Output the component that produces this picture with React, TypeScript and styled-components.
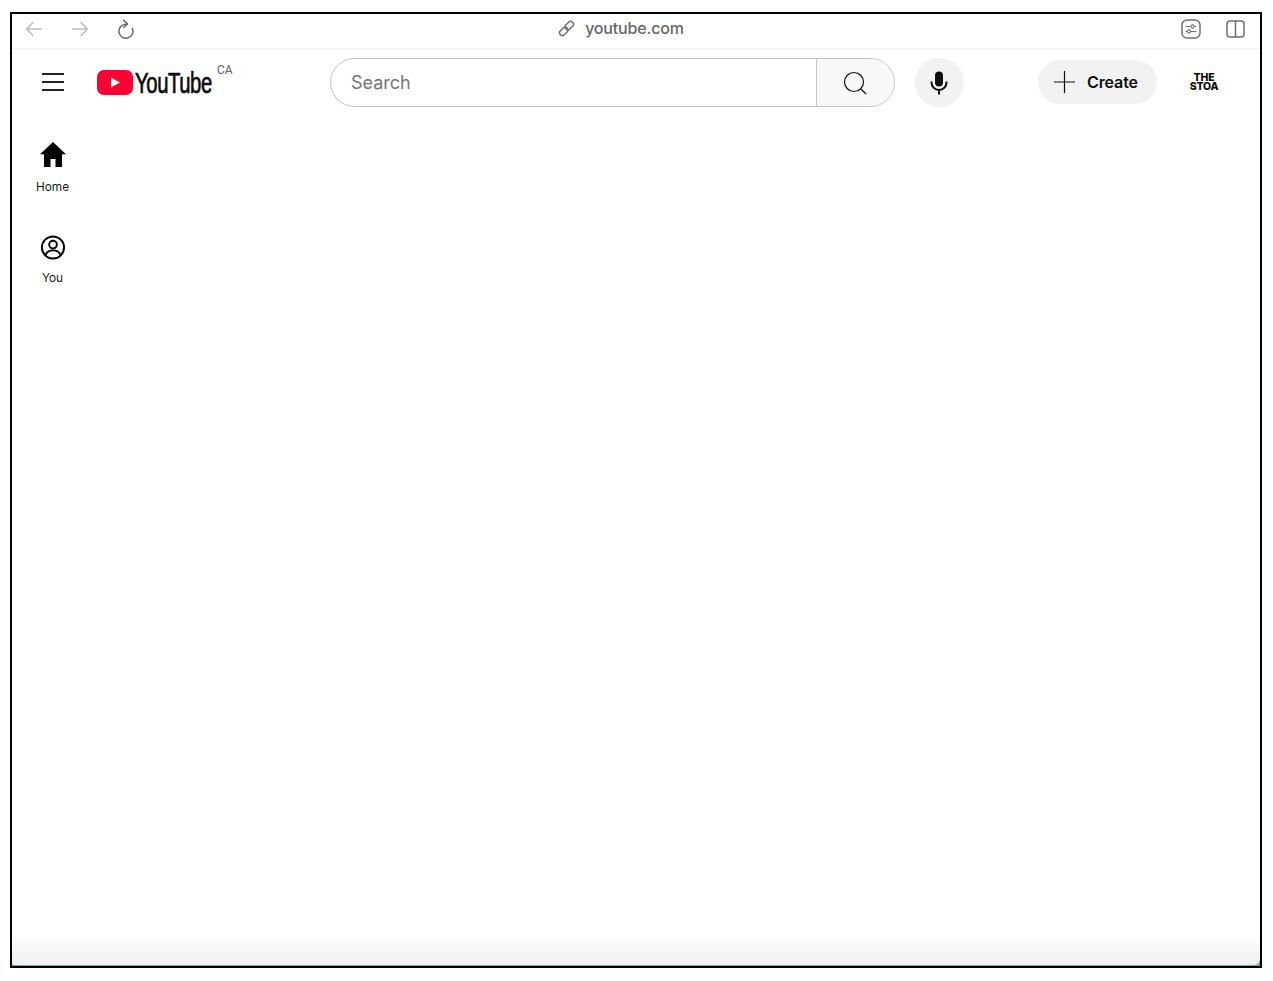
import React from 'react'
import styled, { createGlobalStyle } from 'styled-components'

const GlobalStyle = createGlobalStyle`
  html, body {
    margin: 0;
    padding: 0;
    background: #fff;
  }
  body {
    font-family: 'Roboto', 'Liberation Sans', sans-serif;
  }
`

const Page = styled.div`
  width: 1273px;
  height: 981px;
  padding: 12px 0 0 10px;
  box-sizing: border-box;
`

const Frame = styled.div`
  width: 1252px;
  height: 956px;
  box-sizing: border-box;
  border: 2px solid #000;
  display: flex;
  flex-direction: column;
  background: #fff;
`

const BrowserBar = styled.div`
  height: 35px;
  flex: none;
  box-sizing: border-box;
  padding-bottom: 5px;
  border-bottom: 1px solid #f0f0f0;
  display: grid;
  grid-template-columns: 1fr auto 1fr;
  align-items: center;
`

const BrowserNav = styled.div`
  display: flex;
  align-items: center;
  gap: 28px;
  padding-left: 13px;
`

const BrowserIcon = styled.svg<{ $tone?: string }>`
  display: block;
  fill: none;
  stroke: ${(p) => p.$tone || '#6e6e6e'};
  stroke-width: 1.5;
  stroke-linecap: round;
  stroke-linejoin: round;
`

const Address = styled.div`
  display: flex;
  align-items: center;
  gap: 10px;
  margin-right: 30px;
  font-family: 'Inter', sans-serif;
  font-size: 16px;
  line-height: 19px;
  font-weight: 500;
  letter-spacing: -0.01em;
  color: #666;
`

const BrowserTools = styled.div`
  display: flex;
  align-items: center;
  justify-content: flex-end;
  gap: 25px;
  padding-right: 15px;
`

const Header = styled.header`
  height: 68px;
  flex: none;
  display: flex;
  align-items: flex-start;
`

const MenuButton = styled.div`
  width: 22px;
  margin: 24px 0 0 30px;
  display: flex;
  flex-direction: column;
  gap: 6.5px;
`

const MenuLine = styled.span`
  display: block;
  height: 1.5px;
  background: #222;
`

const Logo = styled.div`
  display: flex;
  align-items: flex-start;
  margin: 21px 0 0 33px;
  width: 233px;
  flex: none;
`

const Wordmark = styled.span`
  display: block;
  width: 77px;
  margin-left: 2px;
  font-family: 'Liberation Sans', sans-serif;
  font-size: 29px;
  line-height: 26px;
  font-weight: 400;
  letter-spacing: -0.6px;
  color: #0c0c0c;
  -webkit-text-stroke: 0.7px #0c0c0c;
  white-space: nowrap;
  transform: scaleX(0.7);
  transform-origin: left center;
`

const Region = styled.sup`
  font-family: 'Roboto', sans-serif;
  font-size: 12px;
  line-height: 12px;
  color: #606060;
  margin: -6px 0 0 5px;
  vertical-align: baseline;
`

const SearchForm = styled.div`
  width: 565px;
  height: 49px;
  margin-top: 9px;
  flex: none;
  display: flex;
  box-sizing: border-box;
  border: 1px solid #c2c2c2;
  border-radius: 25px;
  overflow: hidden;
`

const SearchField = styled.div`
  flex: 1;
  display: flex;
  align-items: center;
  padding-left: 20px;
  font-family: 'Inter', sans-serif;
  font-size: 18px;
  font-weight: 400;
  color: #757575;
`

const SearchButton = styled.div`
  width: 78px;
  flex: none;
  box-sizing: border-box;
  padding-right: 2px;
  display: flex;
  align-items: center;
  justify-content: center;
  background: #f8f8f8;
  border-left: 1px solid #c6c6c6;
`

const RoundButton = styled.div`
  width: 49px;
  height: 49px;
  margin: 9px 0 0 20px;
  flex: none;
  box-sizing: border-box;
  padding-right: 1px;
  border-radius: 50%;
  background: #f2f2f2;
  display: flex;
  align-items: center;
  justify-content: center;
`

const CreateButton = styled.div`
  width: 119px;
  height: 44px;
  margin: 11px 0 0 74px;
  flex: none;
  box-sizing: border-box;
  padding-left: 16px;
  border-radius: 22px;
  background: #f2f2f2;
  display: flex;
  align-items: center;
  gap: 12px;
  font-family: 'Inter', sans-serif;
  font-size: 16px;
  font-weight: 600;
  letter-spacing: -0.1px;
  color: #0f0f0f;
`

const Stoa = styled.div`
  margin: 24px 0 0 32px;
  width: 30px;
  font-family: 'Inter', sans-serif;
  font-size: 10.5px;
  line-height: 9px;
  font-weight: 800;
  letter-spacing: -0.2px;
  text-align: center;
  color: #0a0a0a;
`

const Body = styled.main`
  flex: 1;
  min-height: 0;
`

const Rail = styled.nav`
  width: 81px;
  padding-top: 25px;
  display: flex;
  flex-direction: column;
  gap: 41.5px;
`

const RailItem = styled.div<{ $gap: number }>`
  display: flex;
  flex-direction: column;
  align-items: center;
  gap: ${(p) => p.$gap}px;
  font-family: 'Inter', 'Roboto', sans-serif;
  font-size: 11.8px;
  line-height: 14px;
  color: #1a1a1a;
`

const BottomEdge = styled.div`
  flex: none;
  background: #7fa5b2;
`

const BottomFade = styled.div`
  height: 32px;
  margin-bottom: 1px;
  background: linear-gradient(#ffffff, #f0f0f0);
  border-radius: 0 0 6px 2px;
`

const App = () => (
  <Page>
    <GlobalStyle />
    <Frame>
      <BrowserBar>
        <BrowserNav>
          <BrowserIcon $tone="#bdbdbd" width="18" height="18" viewBox="0 0 18 18">
            <path d="M16.5 9H1.5M8 2.5 1.5 9 8 15.5" />
          </BrowserIcon>
          <BrowserIcon $tone="#bdbdbd" width="18" height="18" viewBox="0 0 18 18">
            <path d="M1.5 9h15M10 2.5 16.5 9 10 15.5" />
          </BrowserIcon>
          <BrowserIcon $tone="#6a6a6a" width="18" height="20" viewBox="0 0 18 20">
            <path d="M9 5.2A7 7 0 1 0 15.400 9.500M6.500 1.200l4 3.900-4 3.400" />
          </BrowserIcon>
        </BrowserNav>
        <Address>
          <BrowserIcon $tone="#6e6e6e" width="17" height="17" viewBox="0 0 17 17" strokeWidth="1.300">
            <rect x="6.500" y="2.800" width="9.500" height="5.600" rx="2.800" transform="rotate(-45 11.250 5.600)" />
            <rect x="1" y="8.600" width="9.500" height="5.600" rx="2.800" transform="rotate(-45 5.750 11.400)" />
          </BrowserIcon>
          youtube.com
        </Address>
        <BrowserTools>
          <BrowserIcon $tone="#707070" width="20" height="20" viewBox="0 0 20 20">
            <rect x="1" y="1" width="18" height="18" rx="5" />
            <path d="M5 7.500h10M5 12.500h10" strokeWidth="1.100" />
            <circle cx="11.500" cy="7.500" r="1.600" fill="#fff" strokeWidth="1.100" />
            <circle cx="8" cy="12.500" r="1.600" fill="#fff" strokeWidth="1.100" />
          </BrowserIcon>
          <BrowserIcon $tone="#707070" width="19" height="18" viewBox="0 0 19 18" strokeWidth="1.800">
            <rect x="1" y="1" width="17" height="16" rx="3" />
            <path d="M9.500 1v16" />
          </BrowserIcon>
        </BrowserTools>
      </BrowserBar>
      <Header>
        <MenuButton>
          <MenuLine />
          <MenuLine />
          <MenuLine />
        </MenuButton>
        <Logo>
          <svg width="36" height="25" viewBox="0 0 36 25">
            <rect width="36" height="25" rx="7" fill="#ff0033" />
            <path d="M14 7.500v10l9-5z" fill="#fff" />
          </svg>
          <Wordmark>YouTube</Wordmark>
          <Region>CA</Region>
        </Logo>
        <SearchForm>
          <SearchField>Search</SearchField>
          <SearchButton>
            <svg width="26" height="26" viewBox="0 0 26 26" fill="none" stroke="#0f0f0f">
              <circle cx="12" cy="12" r="9.500" strokeWidth="1.200" />
              <path d="M19 19l5 5" strokeWidth="1.200" />
            </svg>
          </SearchButton>
        </SearchForm>
        <RoundButton>
          <svg width="18" height="24" viewBox="0 0 18 24">
            <rect x="5" y="0.500" width="8" height="15" rx="4" fill="#0f0f0f" />
            <path d="M1.500 10.500v1a7.500 7.500 0 0 0 15 0v-1M9 19v4.500" fill="none" stroke="#0f0f0f" strokeWidth="2" />
          </svg>
        </RoundButton>
        <CreateButton>
          <svg width="21" height="22" viewBox="0 0 21 22" stroke="#0f0f0f" strokeWidth="1.200">
            <path d="M10.500 0v22M0 11h21" />
          </svg>
          Create
        </CreateButton>
        <Stoa>
          THE
          <br />
          STOA
        </Stoa>
      </Header>
      <Body>
        <Rail>
          <RailItem $gap={12.5}>
            <svg width="26" height="25" viewBox="0 0 26 25">
              <path d="M13 0 0 12.200h4V25h6.500v-8h5v8H22V12.200h4z" fill="#000" />
            </svg>
            Home
          </RailItem>
          <RailItem $gap={10.5}>
            <svg width="26" height="25" viewBox="0 0 26 26" fill="none" stroke="#000" strokeWidth="2">
              <circle cx="13" cy="13" r="11.500" />
              <circle cx="13" cy="10" r="4" />
              <path d="M5 21c1.500-3.500 4.500-5 8-5s6.500 1.500 8 5" />
            </svg>
            You
          </RailItem>
        </Rail>
      </Body>
      <BottomEdge>
        <BottomFade />
      </BottomEdge>
    </Frame>
  </Page>
)

export default App
